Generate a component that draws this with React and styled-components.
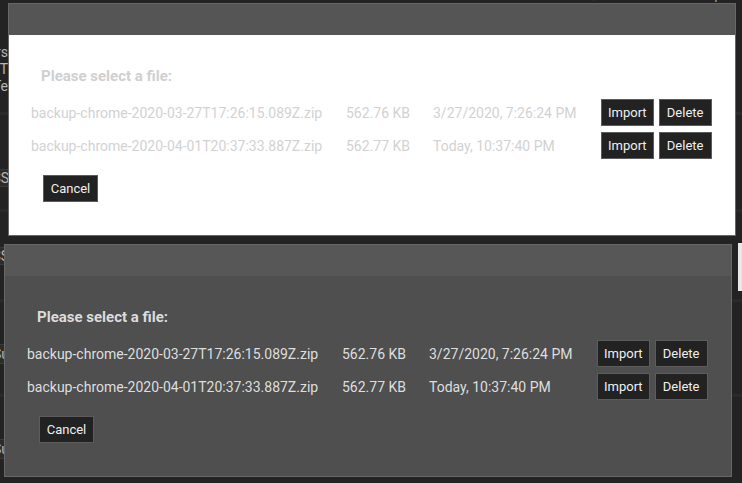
import styled, { createGlobalStyle } from "styled-components";

const GlobalStyle = createGlobalStyle`
  html, body {
    margin: 0;
    padding: 0;
    background: #222;
  }
  body {
    font-family: Roboto, "Liberation Sans", sans-serif;
    -webkit-font-smoothing: none;
  }
`;

const themes = {
  light: { body: "#ffffff", header: "#555555", text: "#d2d2d2", title: "#cfcfcf" },
  dark: { body: "#4f4f4f", header: "#575757", text: "#dedede", title: "#dcdcdc" },
};

const files = [
  {
    name: "backup-chrome-2020-03-27T17:26:15.089Z.zip",
    size: "562.76 KB",
    date: "3/27/2020, 7:26:24 PM",
  },
  {
    name: "backup-chrome-2020-04-01T20:37:33.887Z.zip",
    size: "562.77 KB",
    date: "Today, 10:37:40 PM",
  },
];

const Page = styled.div`
  width: 742px;
  display: flex;
  flex-direction: column;
`;

const Shot = styled.div`
  position: relative;
  height: ${(p) => p.height}px;
  overflow: hidden;
  background: #232323;
`;

const Backdrop = styled.div`
  display: flex;
  flex-direction: column;
`;

const TopNav = styled.div`
  margin-top: -13px;
  height: 14px;
  display: flex;
  justify-content: flex-end;
  align-items: center;
  gap: 14px;
  padding-right: 8px;
  color: #9a9a9a;
  font-size: 14px;
`;

const NavIcon = styled.div`
  width: 11px;
  height: 10px;
  border: 2px solid #8a8a8a;
  border-top: none;
  margin-right: 8px;
`;

const NavDivider = styled.div`
  width: 1px;
  height: 14px;
  background: #3a3a3a;
`;

const EdgeRow = styled.div`
  height: ${(p) => p.h}px;
  margin-top: ${(p) => p.gap || 0}px;
  width: ${(p) => (p.boxed ? 9 : 8)}px;
  display: flex;
  justify-content: flex-end;
  align-items: center;
  overflow: hidden;
  white-space: nowrap;
  color: #b5b5b5;
  font-size: 14px;
  background: ${(p) => (p.boxed ? "#2c2c2c" : "transparent")};
  border-top: ${(p) => (p.boxed ? "1px solid #3a3a3a" : "none")};
  border-bottom: ${(p) => (p.boxed ? "1px solid #3a3a3a" : "none")};
`;

const Band = styled.div`
  height: 3px;
  margin-top: ${(p) => p.gap}px;
  width: 100%;
  background: #2a2a2a;
`;

const SideStrip = styled.div`
  position: absolute;
  right: 0;
  top: 2px;
  width: 4px;
  height: 48px;
  background: #e8e8e8;
`;

const Dialog = styled.div`
  position: absolute;
  top: 3px;
  left: ${(p) => p.left}px;
  width: 728px;
  height: 233px;
  box-sizing: border-box;
  border: 1px solid #676767;
  display: flex;
  flex-direction: column;
  background: ${(p) => themes[p.variant].body};
`;

const Header = styled.div`
  height: 31px;
  flex-shrink: 0;
  background: ${(p) => themes[p.variant].header};
`;

const Body = styled.div`
  flex: 1;
  padding: 0 0 0 22px;
  color: ${(p) => themes[p.variant].text};
  font-size: 14px;
`;

const Title = styled.div`
  margin: 30px 0 0 10px;
  line-height: 22px;
  font-size: 15px;
  font-weight: 700;
  color: ${(p) => themes[p.variant].title};
`;

const FileTable = styled.div`
  margin-top: 9px;
  display: flex;
  flex-direction: column;
`;

const FileRow = styled.div`
  height: 33px;
  display: grid;
  grid-template-columns: 315px 87px 168px auto;
  align-items: center;
  white-space: nowrap;
`;

const Actions = styled.div`
  display: flex;
  gap: 5px;
`;

const Button = styled.button`
  height: 27px;
  min-width: ${(p) => p.w}px;
  box-sizing: border-box;
  padding: 0 6px;
  margin: 0;
  background: #222;
  border: 1px solid #5c5c5c;
  border-radius: 0;
  color: #f0f0f0;
  font-family: Roboto, "Liberation Sans", sans-serif;
  font-size: 13px;
  cursor: pointer;
`;

const Footer = styled.div`
  margin: 13px 0 0 12px;
`;

function FileDialog({ variant, left }) {
  return (
    <Dialog variant={variant} left={left}>
      <Header variant={variant} />
      <Body variant={variant}>
        <Title variant={variant}>Please select a file:</Title>
        <FileTable>
          {files.map((f) => (
            <FileRow key={f.name}>
              <div>{f.name}</div>
              <div>{f.size}</div>
              <div>{f.date}</div>
              <Actions>
                <Button w={52}>Import</Button>
                <Button w={53}>Delete</Button>
              </Actions>
            </FileRow>
          ))}
        </FileTable>
        <Footer>
          <Button w={55}>Cancel</Button>
        </Footer>
      </Body>
    </Dialog>
  );
}

export default function App() {
  return (
    <Page>
      <GlobalStyle />
      <Shot height={241}>
        <Backdrop>
          <TopNav>
            <NavIcon />
            <NavDivider />
            <span>Installed userscripts</span>
          </TopNav>
          <EdgeRow h={17} gap={42}>Users</EdgeRow>
          <EdgeRow h={17}>TT</EdgeRow>
          <EdgeRow h={18}>Te</EdgeRow>
          <Band gap={17} />
          <EdgeRow h={16} gap={54} boxed>
            SS
          </EdgeRow>
          <Band gap={22} />
        </Backdrop>
        <FileDialog variant="light" left={8} />
      </Shot>
      <Shot height={242}>
        <Backdrop>
          <EdgeRow h={16} gap={6} boxed>
            SS
          </EdgeRow>
          <Band gap={34} />
          <EdgeRow h={18} gap={42} boxed>
            Su
          </EdgeRow>
          <Band gap={30} />
          <EdgeRow h={18} gap={42} boxed>
            Su
          </EdgeRow>
        </Backdrop>
        <SideStrip />
        <FileDialog variant="dark" left={4} />
      </Shot>
    </Page>
  );
}
